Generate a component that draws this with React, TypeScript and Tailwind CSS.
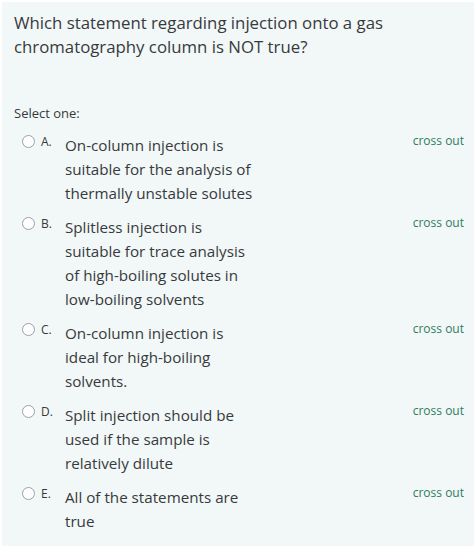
const options = [
  { letter: 'A.', text: 'On-column injection is suitable for the analysis of thermally unstable solutes' },
  { letter: 'B.', text: 'Splitless injection is suitable for trace analysis of high-boiling solutes in low-boiling solvents' },
  { letter: 'C.', text: 'On-column injection is ideal for high-boiling solvents.' },
  { letter: 'D.', text: 'Split injection should be used if the sample is relatively dilute' },
  { letter: 'E.', text: 'All of the statements are true' },
]

const App = () => {
  return (
    <div className="h-[553px] w-[474px] bg-white pl-[2px] pt-[2px] pb-[7px]">
      <div className="h-full bg-[#f2f7f8] pl-[12px] pt-[9px] text-[#373a3c]" style={{ fontFamily: '"Open Sans", sans-serif' }}>
        <p className="w-[380px] text-[16.8px] leading-[24px]">
          Which statement regarding injection onto a gas chromatography column is NOT true?
        </p>
        <p className="mt-[44px] text-[13px] leading-[20px]">Select one:</p>
        <div className="mt-[10px] flex flex-col gap-[10px]">
          {options.map((o) => (
            <div key={o.letter} className="flex items-start">
              <span className="mt-[2px] ml-[8px] h-[13px] w-[13px] shrink-0 rounded-full border border-[#9aa0a5] bg-white" />
              <span className="ml-[6px] w-[24px] shrink-0 text-[12px] leading-[18px]">{o.letter}</span>
              <span className="w-[188px] text-[15.2px] leading-[24px]">{o.text}</span>
              <span className="ml-auto mr-[10px] -mt-[2px] text-[12px] leading-[20px] text-[#2f7d5a]">cross out</span>
            </div>
          ))}
        </div>
      </div>
    </div>
  )
}

export default App
